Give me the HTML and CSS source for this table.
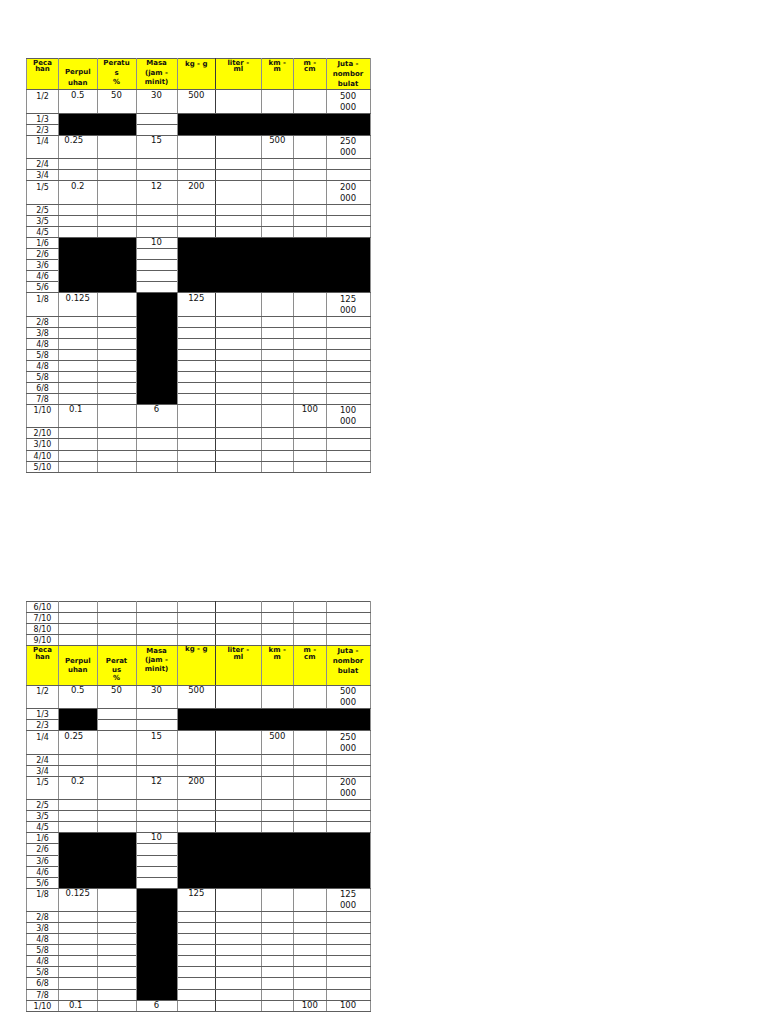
FILE: index.html
```html
<!DOCTYPE html>
<html>
<head>
<meta charset="utf-8">
<title>Pecahan</title>
<link rel="stylesheet" href="styles.css">
</head>
<body>
<div class="page">
<table class="sheet sheet-one">
<colgroup><col class="w1"><col class="w2"><col class="w3"><col class="w4"><col class="w5"><col class="w6"><col class="w7"><col class="w8"><col class="w9"></colgroup>
<tr class="head">
<td class="tight">Peca<br>han</td>
<td class="perpul">Perpul<br>uhan</td>
<td class="peratus">Peratu<br>s<br>%</td>
<td class="masa">Masa<br>(jam -<br>minit)</td>
<td class="kg">kg - g</td>
<td class="tight">liter -<br>ml</td>
<td class="tight">km -<br>m</td>
<td class="tight">m -<br>cm</td>
<td class="juta">Juta -<br>nombor<br>bulat</td>
</tr>
<tr class="t"><td class="fr">1/2</td><td>0.5</td><td>50</td><td>30</td><td class="kg">500</td><td></td><td></td><td></td><td class="two">500<br>000</td></tr>
<tr class="s"><td class="fr">1/3</td><td class="blk" colspan="2" rowspan="2"></td><td></td><td class="blk" colspan="5" rowspan="2"></td></tr>
<tr class="s"><td class="fr">2/3</td><td></td></tr>
<tr class="t"><td class="fr">1/4</td><td class="lft">0.25</td><td></td><td>15</td><td class="kg"></td><td></td><td>500</td><td></td><td class="two">250<br>000</td></tr>
<tr class="s"><td class="fr">2/4</td><td></td><td></td><td></td><td class="kg"></td><td></td><td></td><td></td><td></td></tr>
<tr class="s"><td class="fr">3/4</td><td></td><td></td><td></td><td class="kg"></td><td></td><td></td><td></td><td></td></tr>
<tr class="t"><td class="fr">1/5</td><td>0.2</td><td></td><td>12</td><td class="kg">200</td><td></td><td></td><td></td><td class="two">200<br>000</td></tr>
<tr class="s"><td class="fr">2/5</td><td></td><td></td><td></td><td class="kg"></td><td></td><td></td><td></td><td></td></tr>
<tr class="s"><td class="fr">3/5</td><td></td><td></td><td></td><td class="kg"></td><td></td><td></td><td></td><td></td></tr>
<tr class="s"><td class="fr">4/5</td><td></td><td></td><td></td><td class="kg"></td><td></td><td></td><td></td><td></td></tr>
<tr class="s"><td class="fr">1/6</td><td class="blk" colspan="2" rowspan="5"></td><td>10</td><td class="blk" colspan="5" rowspan="5"></td></tr>
<tr class="s"><td class="fr">2/6</td><td></td></tr>
<tr class="s"><td class="fr">3/6</td><td></td></tr>
<tr class="s"><td class="fr">4/6</td><td></td></tr>
<tr class="s"><td class="fr">5/6</td><td></td></tr>
<tr class="t"><td class="fr">1/8</td><td>0.125</td><td></td><td class="blk" rowspan="9"></td><td class="kg">125</td><td></td><td></td><td></td><td class="two">125<br>000</td></tr>
<tr class="s"><td class="fr">2/8</td><td></td><td></td><td class="kg"></td><td></td><td></td><td></td><td></td></tr>
<tr class="s"><td class="fr">3/8</td><td></td><td></td><td class="kg"></td><td></td><td></td><td></td><td></td></tr>
<tr class="s"><td class="fr">4/8</td><td></td><td></td><td class="kg"></td><td></td><td></td><td></td><td></td></tr>
<tr class="s"><td class="fr">5/8</td><td></td><td></td><td class="kg"></td><td></td><td></td><td></td><td></td></tr>
<tr class="s"><td class="fr">4/8</td><td></td><td></td><td class="kg"></td><td></td><td></td><td></td><td></td></tr>
<tr class="s"><td class="fr">5/8</td><td></td><td></td><td class="kg"></td><td></td><td></td><td></td><td></td></tr>
<tr class="s"><td class="fr">6/8</td><td></td><td></td><td class="kg"></td><td></td><td></td><td></td><td></td></tr>
<tr class="s"><td class="fr">7/8</td><td></td><td></td><td class="kg"></td><td></td><td></td><td></td><td></td></tr>
<tr class="t"><td class="fr">1/10</td><td class="lft2">0.1</td><td></td><td>6</td><td class="kg"></td><td></td><td></td><td>100</td><td class="two">100<br>000</td></tr>
<tr class="s"><td class="fr">2/10</td><td></td><td></td><td></td><td class="kg"></td><td></td><td></td><td></td><td></td></tr>
<tr class="s"><td class="fr">3/10</td><td></td><td></td><td></td><td class="kg"></td><td></td><td></td><td></td><td></td></tr>
<tr class="s"><td class="fr">4/10</td><td></td><td></td><td></td><td class="kg"></td><td></td><td></td><td></td><td></td></tr>
<tr class="s"><td class="fr">5/10</td><td></td><td></td><td></td><td class="kg"></td><td></td><td></td><td></td><td></td></tr>
</table>

<table class="sheet sheet-two">
<colgroup><col class="w1"><col class="w2"><col class="w3"><col class="w4"><col class="w5"><col class="w6"><col class="w7"><col class="w8"><col class="w9"></colgroup>
<tr class="s"><td class="fr">6/10</td><td></td><td></td><td></td><td class="kg"></td><td></td><td></td><td></td><td></td></tr>
<tr class="s"><td class="fr">7/10</td><td></td><td></td><td></td><td class="kg"></td><td></td><td></td><td></td><td></td></tr>
<tr class="s"><td class="fr">8/10</td><td></td><td></td><td></td><td class="kg"></td><td></td><td></td><td></td><td></td></tr>
<tr class="s"><td class="fr">9/10</td><td></td><td></td><td></td><td class="kg"></td><td></td><td></td><td></td><td></td></tr>
<tr class="head">
<td class="tight">Peca<br>han</td>
<td class="perpul">Perpul<br>uhan</td>
<td class="peratus">Perat<br>us<br>%</td>
<td class="masa">Masa<br>(jam -<br>minit)</td>
<td class="kg">kg - g</td>
<td class="tight">liter -<br>ml</td>
<td class="tight">km -<br>m</td>
<td class="tight">m -<br>cm</td>
<td class="juta">Juta -<br>nombor<br>bulat</td>
</tr>
<tr class="t"><td class="fr">1/2</td><td>0.5</td><td>50</td><td>30</td><td class="kg">500</td><td></td><td></td><td></td><td class="two">500<br>000</td></tr>
<tr class="s"><td class="fr">1/3</td><td class="blk" rowspan="2"></td><td></td><td></td><td class="blk" colspan="5" rowspan="2"></td></tr>
<tr class="s"><td class="fr">2/3</td><td></td><td></td></tr>
<tr class="t"><td class="fr">1/4</td><td class="lft">0.25</td><td></td><td>15</td><td class="kg"></td><td></td><td>500</td><td></td><td class="two">250<br>000</td></tr>
<tr class="s"><td class="fr">2/4</td><td></td><td></td><td></td><td class="kg"></td><td></td><td></td><td></td><td></td></tr>
<tr class="s"><td class="fr">3/4</td><td></td><td></td><td></td><td class="kg"></td><td></td><td></td><td></td><td></td></tr>
<tr class="t"><td class="fr">1/5</td><td>0.2</td><td></td><td>12</td><td class="kg">200</td><td></td><td></td><td></td><td class="two">200<br>000</td></tr>
<tr class="s"><td class="fr">2/5</td><td></td><td></td><td></td><td class="kg"></td><td></td><td></td><td></td><td></td></tr>
<tr class="s"><td class="fr">3/5</td><td></td><td></td><td></td><td class="kg"></td><td></td><td></td><td></td><td></td></tr>
<tr class="s"><td class="fr">4/5</td><td></td><td></td><td></td><td class="kg"></td><td></td><td></td><td></td><td></td></tr>
<tr class="s"><td class="fr">1/6</td><td class="blk" colspan="2" rowspan="5"></td><td>10</td><td class="blk" colspan="5" rowspan="5"></td></tr>
<tr class="s"><td class="fr">2/6</td><td></td></tr>
<tr class="s"><td class="fr">3/6</td><td></td></tr>
<tr class="s"><td class="fr">4/6</td><td></td></tr>
<tr class="s"><td class="fr">5/6</td><td></td></tr>
<tr class="t"><td class="fr">1/8</td><td>0.125</td><td></td><td class="blk" rowspan="9"></td><td class="kg">125</td><td></td><td></td><td></td><td class="two">125<br>000</td></tr>
<tr class="s"><td class="fr">2/8</td><td></td><td></td><td class="kg"></td><td></td><td></td><td></td><td></td></tr>
<tr class="s"><td class="fr">3/8</td><td></td><td></td><td class="kg"></td><td></td><td></td><td></td><td></td></tr>
<tr class="s"><td class="fr">4/8</td><td></td><td></td><td class="kg"></td><td></td><td></td><td></td><td></td></tr>
<tr class="s"><td class="fr">5/8</td><td></td><td></td><td class="kg"></td><td></td><td></td><td></td><td></td></tr>
<tr class="s"><td class="fr">4/8</td><td></td><td></td><td class="kg"></td><td></td><td></td><td></td><td></td></tr>
<tr class="s"><td class="fr">5/8</td><td></td><td></td><td class="kg"></td><td></td><td></td><td></td><td></td></tr>
<tr class="s"><td class="fr">6/8</td><td></td><td></td><td class="kg"></td><td></td><td></td><td></td><td></td></tr>
<tr class="s"><td class="fr">7/8</td><td></td><td></td><td class="kg"></td><td></td><td></td><td></td><td></td></tr>
<tr class="s"><td class="fr">1/10</td><td class="lft2">0.1</td><td></td><td>6</td><td class="kg"></td><td></td><td></td><td>100</td><td>100</td></tr>
</table>
</div>
</body>
</html>
```

FILE: styles.css
```css
html, body {
  margin: 0;
  padding: 0;
  background: #ffffff;
}

.page {
  padding: 58px 0 0 26px;
  font-family: "DejaVu Sans", "Verdana", sans-serif;
  color: #111111;
}

.sheet {
  border-collapse: collapse;
  table-layout: fixed;
  width: 344px;
  border: 1px solid #9a9a9a;
}

.sheet-two {
  margin-top: 128.5px;
}

.w1 { width: 32px; }
.w2 { width: 38.5px; }
.w3 { width: 39px; }
.w4 { width: 41px; }
.w5 { width: 38.5px; }
.w6 { width: 45.5px; }
.w7 { width: 32.5px; }
.w8 { width: 32.5px; }
.w9 { width: 44px; }

.sheet td {
  padding: 0;
  border-top: 1px solid #5e5e5e;
  border-bottom: 1px solid #5e5e5e;
  border-left: 1px solid #8e8e8e;
  border-right: 1px solid #8e8e8e;
  text-align: center;
  vertical-align: top;
  font-size: 8.5px;
  line-height: 9.8px;
  white-space: nowrap;
  overflow: hidden;
}

.sheet td.kg {
  border-right-color: #3a3a3a;
}

.sheet tr.s { height: 11.05px; }
.sheet tr.t { height: 23.5px; }

.sheet td.fr {
  font-stretch: condensed;
  font-size: 8.8px;
  line-height: 10px;
}

.sheet tr.t td {
  padding-top: 0.5px;
}

.sheet td.two {
  line-height: 11px;
}

.sheet td.lft {
  text-indent: -8px;
}

.sheet td.lft2 {
  text-indent: -4px;
}

.sheet td.blk {
  background: #000000;
}

/* header */
.sheet tr.head td {
  background: #ffff00;
  font-weight: bold;
  font-size: 7px;
  line-height: 10px;
  color: #111111;
}

.sheet-one tr.head { height: 30.7px; }
.sheet-two tr.head { height: 39.3px; }

.sheet tr.head td.tight {
  line-height: 6.7px;
  padding-top: 0.5px;
}

.sheet-one tr.head td.perpul {
  line-height: 10.5px;
  padding-top: 8px;
}

.sheet-two tr.head td.perpul {
  line-height: 9px;
  padding-top: 11px;
}

.sheet-one tr.head td.peratus,
.sheet-one tr.head td.masa {
  line-height: 9.6px;
}

.sheet-two tr.head td.peratus {
  line-height: 8.7px;
  padding-top: 10.5px;
}

.sheet-two tr.head td.masa {
  line-height: 9.2px;
  padding-top: 0.5px;
}

.sheet-two tr.head td.kg {
  padding-top: 0;
  line-height: 7px;
}
```
